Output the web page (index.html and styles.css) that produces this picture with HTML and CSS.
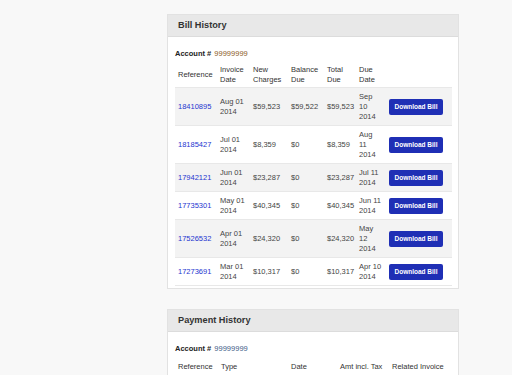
FILE: index.html
```html
<!DOCTYPE html>
<html>
<head>
<meta charset="utf-8">
<link rel="stylesheet" href="styles.css">
</head>
<body>
<main class="main">
  <section class="panel">
    <div class="panel-head">Bill History</div>
    <div class="panel-body">
      <div class="account"><span class="acc-label">Account #</span> <span class="acc-num bill">99999999</span></div>
      <table class="grid bills">
        <colgroup>
          <col class="c-ref"><col class="c-inv"><col class="c-new"><col class="c-bal"><col class="c-tot"><col class="c-due"><col class="c-btn">
        </colgroup>
        <thead>
          <tr><th>Reference</th><th>Invoice<br>Date</th><th>New<br>Charges</th><th>Balance<br>Due</th><th>Total<br>Due</th><th>Due<br>Date</th><th></th></tr>
        </thead>
        <tbody>
          <tr class="alt"><td><a class="ref" href="#">18410895</a></td><td>Aug 01<br>2014</td><td>$59,523</td><td>$59,522</td><td>$59,523</td><td>Sep<br>10<br>2014</td><td><button class="btn">Download Bill</button></td></tr>
          <tr><td><a class="ref" href="#">18185427</a></td><td>Jul 01<br>2014</td><td>$8,359</td><td>$0</td><td>$8,359</td><td>Aug<br>11<br>2014</td><td><button class="btn">Download Bill</button></td></tr>
          <tr class="alt"><td><a class="ref" href="#">17942121</a></td><td>Jun 01<br>2014</td><td>$23,287</td><td>$0</td><td>$23,287</td><td>Jul 11<br>2014</td><td><button class="btn">Download Bill</button></td></tr>
          <tr><td><a class="ref" href="#">17735301</a></td><td>May 01<br>2014</td><td>$40,345</td><td>$0</td><td>$40,345</td><td>Jun 11<br>2014</td><td><button class="btn">Download Bill</button></td></tr>
          <tr class="alt"><td><a class="ref" href="#">17526532</a></td><td>Apr 01<br>2014</td><td>$24,320</td><td>$0</td><td>$24,320</td><td>May<br>12<br>2014</td><td><button class="btn">Download Bill</button></td></tr>
          <tr><td><a class="ref" href="#">17273691</a></td><td>Mar 01<br>2014</td><td>$10,317</td><td>$0</td><td>$10,317</td><td>Apr 10<br>2014</td><td><button class="btn">Download Bill</button></td></tr>
        </tbody>
      </table>
    </div>
  </section>

  <section class="panel">
    <div class="panel-head">Payment History</div>
    <div class="panel-body">
      <div class="account"><span class="acc-label">Account #</span> <span class="acc-num pay">99999999</span></div>
      <table class="grid payments">
        <colgroup>
          <col class="p-ref"><col class="p-type"><col class="p-date"><col class="p-amt"><col class="p-inv">
        </colgroup>
        <thead>
          <tr><th>Reference</th><th>Type</th><th>Date</th><th>Amt incl. Tax</th><th>Related Invoice</th></tr>
        </thead>
      </table>
    </div>
  </section>
</main>
</body>
</html>
```
FILE: styles.css
```css
html, body {
  margin: 0;
  padding: 0;
  background: #f8f8f8;
  font-family: "Liberation Sans", Arial, sans-serif;
  color: #333;
}
.main {
  margin-left: 167px;
  width: 292px;
  padding-top: 14px;
  display: flex;
  flex-direction: column;
  gap: 20px;
}
.panel {
  background: #fff;
  border: 1px solid #e2e2e2;
}
.panel-head {
  background: #e8e8e8;
  border-bottom: 1px solid #dcdcdc;
  height: 21px;
  line-height: 21px;
  padding-left: 10px;
  font-size: 9.2px;
  font-weight: bold;
  color: #333;
}
.panel-body {
  padding: 12px 6px 2px 7px;
}
.account {
  font-size: 7.5px;
  line-height: 10px;
  color: #222;
  margin-bottom: 5px;
}
.acc-label { font-weight: bold; margin-right: 1px; }
.acc-num.bill { color: #8a5a1e; }
.acc-num.pay { color: #3c5a86; }
.grid {
  width: 277px;
  border-collapse: collapse;
  table-layout: fixed;
  font-size: 7.5px;
  line-height: 10px;
}
.grid th {
  text-align: left;
  font-weight: normal;
  color: #333;
  padding: 1px 0 2px 3px;
  vertical-align: middle;
  border-bottom: 1px solid #e8e8e8;
}
.grid td {
  padding: 3.5px 0 3.5px 3px;
  vertical-align: middle;
  color: #444;
  border-bottom: 1px solid #e8e8e8;
}
.grid tr.alt td { background: #f3f3f3; }
.c-ref { width: 42px; }
.c-inv { width: 33px; }
.c-new { width: 38px; }
.c-bal { width: 36px; }
.c-tot { width: 32px; }
.c-due { width: 30px; }
.c-btn { width: 66px; }
.p-ref { width: 43px; }
.p-type { width: 70px; }
.p-date { width: 49px; }
.p-amt { width: 52px; }
.p-inv { width: 63px; }
.payments th { border-bottom: none; padding-top: 3px; }
.ref {
  color: #2536d0;
  text-decoration: none;
}
.btn {
  display: block;
  width: 54px;
  height: 16px;
  padding: 0;
  border: none;
  border-radius: 2px;
  background: #1f2fb5;
  color: #fff;
  font-family: "Liberation Sans", Arial, sans-serif;
  font-size: 6.5px;
  font-weight: bold;
  line-height: 16px;
  text-align: center;
}
```
